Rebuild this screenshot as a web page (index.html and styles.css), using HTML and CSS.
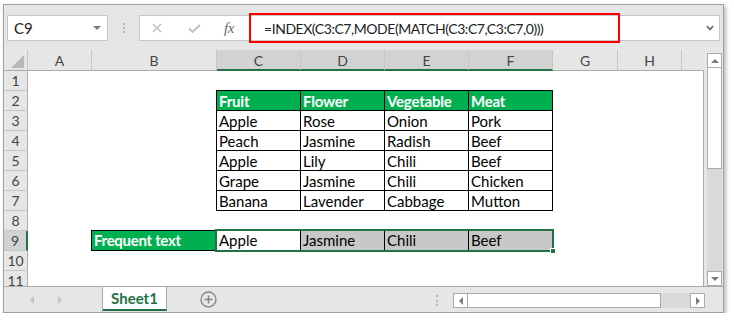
FILE: index.html
```html
<!DOCTYPE html>
<html>
<head>
<meta charset="utf-8">
<title>Excel</title>
<link rel="stylesheet" href="styles.css">
</head>
<body>
<div class="window">
  <div class="toolbar">
    <div class="namebox"><span class="ref">C9</span><span class="dd"></span></div>
    <div class="vdots"><i></i><i></i><i></i></div>
    <div class="fbar">
      <div class="ficons">
        <svg class="ic-x" width="10" height="10" viewBox="0 0 10 10"><path d="M1 1 L9 9 M9 1 L1 9" stroke="#bdbdbd" stroke-width="1.4" fill="none"/></svg>
        <svg class="ic-ok" width="13" height="9" viewBox="0 0 13 9"><path d="M1 4.5 L4.5 8 L12 1" stroke="#bdbdbd" stroke-width="1.8" fill="none"/></svg>
        <span class="fx">fx</span>
      </div>
      <div class="formula">=INDEX(C3:C7,MODE(MATCH(C3:C7,C3:C7,0)))</div>
      <svg class="chev" width="8" height="6" viewBox="0 0 8 6"><path d="M0.8 1 L4 4.4 L7.2 1" stroke="#6b6b6b" stroke-width="1.8" fill="none"/></svg>
    </div>
  </div>

  <div class="sheet">
    <div class="main">
      <div class="colhdrs">
        <div class="corner"><svg width="13" height="13" viewBox="0 0 13 13"><path d="M13 0 L13 13 L0 13 Z" fill="#b9b9b9"/></svg></div>
        <div class="ch w64">A</div>
        <div class="ch w125">B</div>
        <div class="ch w84 sel">C</div>
        <div class="ch w84 sel">D</div>
        <div class="ch w84 sel">E</div>
        <div class="ch w84 sel">F</div>
        <div class="ch w65">G</div>
        <div class="ch w64">H</div>
        <div class="ch rest"></div>
      </div>
      <div class="body">
        <div class="rowhdrs">
          <div class="rh">1</div>
          <div class="rh">2</div>
          <div class="rh">3</div>
          <div class="rh">4</div>
          <div class="rh">5</div>
          <div class="rh">6</div>
          <div class="rh">7</div>
          <div class="rh">8</div>
          <div class="rh sel">9</div>
          <div class="rh">10</div>
          <div class="rh">11</div>
        </div>
        <div class="cells">
          <div class="data">
            <div class="c hd">Fruit</div><div class="c hd">Flower</div><div class="c hd">Vegetable</div><div class="c hd">Meat</div>
            <div class="c">Apple</div><div class="c">Rose</div><div class="c">Onion</div><div class="c">Pork</div>
            <div class="c">Peach</div><div class="c">Jasmine</div><div class="c">Radish</div><div class="c">Beef</div>
            <div class="c">Apple</div><div class="c">Lily</div><div class="c">Chili</div><div class="c">Beef</div>
            <div class="c">Grape</div><div class="c">Jasmine</div><div class="c">Chili</div><div class="c">Chicken</div>
            <div class="c">Banana</div><div class="c">Lavender</div><div class="c">Cabbage</div><div class="c">Mutton</div>
          </div>
          <div class="label">Frequent text</div>
          <div class="selection">
            <div class="s active">Apple</div>
            <div class="s">Jasmine</div>
            <div class="s">Chili</div>
            <div class="s">Beef</div>
            <span class="handle"></span>
          </div>
        </div>
      </div>
    </div>
    <div class="vscroll">
      <div class="sbtn"><span class="tri-up"></span></div>
      <div class="vthumb"></div>
      <div class="vtrack"></div>
      <div class="sbtn"><span class="tri-down"></span></div>
    </div>
  </div>

  <div class="tabbar">
    <div class="nav"><span class="nl"></span><span class="nr"></span></div>
    <div class="tab">Sheet1</div>
    <svg class="plus" width="17" height="17" viewBox="0 0 17 17"><circle cx="8.5" cy="8.5" r="7.5" stroke="#858585" stroke-width="1.3" fill="none"/><path d="M8.5 4.5 V12.5 M4.5 8.5 H12.5" stroke="#858585" stroke-width="1.5"/></svg>
    <div class="hdots"><i></i><i></i><i></i></div>
    <div class="hscroll">
      <div class="sbtn"><span class="tri-left"></span></div>
      <div class="hthumb"></div>
      <div class="htrack"></div>
      <div class="sbtn"><span class="tri-right"></span></div>
    </div>
  </div>
</div>
</body>
</html>
```

FILE: styles.css
```css
* { box-sizing: border-box; }
html, body { margin: 0; padding: 0; background: #fff; }
body { font-family: Lato, "Liberation Sans", sans-serif; color: #000; }

.window {
  margin: 4px 0 0 3px;
  width: 721px;
  height: 309px;
  border: 1px solid #a0a0a0;
  background: #e6e6e6;
  box-shadow: 2px 2px 4px rgba(0,0,0,0.28);
  display: flex;
  flex-direction: column;
}

/* toolbar */
.toolbar { height: 45px; flex: none; display: flex; align-items: flex-start; padding: 10px 0 0 3px; }
.namebox {
  width: 101px; height: 26px; background: #fff; border: 1px solid #c6c6c6;
  display: flex; align-items: center; padding-left: 6px; font-size: 15px; color: #222;
}
.namebox .dd { margin-left: auto; margin-right: 6px; border-left: 4px solid transparent; border-right: 4px solid transparent; border-top: 4px solid #7a7a7a; }
.vdots { margin: 8px 0 0 15px; width: 2px; display: flex; flex-direction: column; gap: 2px; }
.vdots i, .hdots i { display: block; width: 2px; height: 2px; background: #b5b5b5; }
.fbar {
  margin-left: 14px; width: 581px; height: 26px; background: #fff; border: 1px solid #c6c6c6;
  display: flex; align-items: center;
}
.ficons { width: 109px; flex: none; display: flex; align-items: center; }
.ic-x { margin-left: 12px; }
.ic-ok { margin-left: 26px; }
.fx { margin-left: 23px; font-family: "Liberation Serif", serif; font-style: italic; font-size: 15px; color: #6a6a6a; letter-spacing: -0.5px; }
.formula {
  width: 371px; height: 30px; flex: none; border: 2px solid #f00; display: flex; align-items: center;
  padding-left: 13px; font-size: 14px; letter-spacing: -0.45px; color: #222; white-space: nowrap;
}
.chev { margin-left: auto; margin-right: 5px; }

/* sheet */
.sheet { height: 236px; flex: none; display: flex; }
.main { width: 700px; display: flex; flex-direction: column; }
.colhdrs { height: 21px; flex: none; display: flex; }
.corner { width: 24px; flex: none; border-right: 1px solid #c6c6c6; border-bottom: 1px solid #ababab; display: flex; align-items: flex-end; justify-content: flex-end; padding: 0 3px 2px 0; }
.ch {
  flex: none; border-right: 1px solid #c6c6c6; border-bottom: 1px solid #ababab;
  display: flex; align-items: center; justify-content: center; font-size: 14px; color: #444; padding-top: 1px;
}
.ch.sel { background: #d2d2d2; border-bottom: 2px solid #217346; padding-top: 2px; }
.w64 { width: 64px; } .w125 { width: 125px; } .w84 { width: 84px; } .w65 { width: 65px; }
.ch.rest { flex: 1; border-right: none; }

.body { flex: 1; display: flex; overflow: hidden; }
.rowhdrs { width: 24px; flex: none; display: flex; flex-direction: column; }
.rh {
  height: 20px; flex: none; border-right: 1px solid #ababab; border-bottom: 1px solid #c6c6c6;
  display: flex; align-items: center; justify-content: center; font-size: 14px; color: #444;
}
.rh.sel { background: #d2d2d2; border-right: 2px solid #217346; }

.cells {
  flex: 1; background: #fff; border-right: 1px solid #ababab;
  display: grid; grid-template-columns: 64px 125px 84px 84px 84px 84px 65px 64px 1fr;
  grid-template-rows: repeat(11, 20px); align-content: start;
}
.data {
  grid-column: 3 / span 4; grid-row: 2 / span 6; margin: -1px 0 0 -1px;
  width: 337px; height: 121px; background: #000; padding: 1px;
  display: grid; grid-template-columns: repeat(4, 83px); grid-template-rows: repeat(6, 19px); gap: 1px;
}
.c { background: #fff; font-size: 15px; line-height: 19px; padding: 1px 0 0 2px; white-space: nowrap; }
.c.hd { background: #00b050; color: #fff; font-weight: bold; letter-spacing: -0.2px; }
.label {
  grid-column: 2; grid-row: 9; margin: -1px 0 0 -1px; height: 21px;
  background: #00b050; border: 1px solid #000; color: #fff; font-weight: bold; letter-spacing: -0.3px;
  font-size: 15px; line-height: 19px; padding: 0 0 0 2px; white-space: nowrap;
}
.selection {
  grid-column: 3 / span 4; grid-row: 9; margin: -2px -1px -1px -2px; position: relative;
  border: 2px solid #217346; background: #fff;
  display: grid; grid-template-columns: 83px 84px 84px 84px;
}
.s { background: #c8c8c8; border-left: 1px solid #000; font-size: 15px; line-height: 19px; padding: 0 0 0 2px; white-space: nowrap; }
.s.active { background: #fff; border-left: none; padding-left: 2px; }
.handle { position: absolute; right: -4px; bottom: -4px; width: 6px; height: 6px; background: #217346; border: 1px solid #fff; }

/* vertical scrollbar */
.vscroll { width: 19px; flex: none; display: flex; flex-direction: column; padding: 3px 0 0 3px; }
.sbtn { width: 15px; height: 15px; flex: none; background: #fff; border: 1px solid #ababab; display: flex; align-items: center; justify-content: center; }
.vthumb { width: 15px; height: 101px; flex: none; background: #fff; border: 1px solid #ababab; border-top: none; }
.vtrack { flex: 1; width: 15px; background: #dadada; }
.tri-up { border-left: 4px solid transparent; border-right: 4px solid transparent; border-bottom: 4px solid #7a7a7a; }
.tri-down { border-left: 4px solid transparent; border-right: 4px solid transparent; border-top: 4px solid #7a7a7a; }
.tri-left { border-top: 4px solid transparent; border-bottom: 4px solid transparent; border-right: 4px solid #7a7a7a; }
.tri-right { border-top: 4px solid transparent; border-bottom: 4px solid transparent; border-left: 4px solid #7a7a7a; }

/* tab bar */
.tabbar { height: 26px; flex: none; border-top: 1px solid #ababab; display: flex; align-items: flex-start; }
.nav { width: 99px; height: 25px; flex: none; border-right: 1px solid #ababab; display: flex; align-items: center; padding-left: 26px; }
.nl { border-top: 4px solid transparent; border-bottom: 4px solid transparent; border-right: 4px solid #c4c4c4; }
.nr { margin-left: 24px; border-top: 4px solid transparent; border-bottom: 4px solid transparent; border-left: 4px solid #c4c4c4; }
.tab {
  width: 64px; height: 24px; flex: none; background: #fff; border-right: 1px solid #ababab; border-bottom: 2px solid #217346;
  display: flex; align-items: center; justify-content: center; color: #217346; font-weight: bold; font-size: 15px;
}
.plus { margin: 4px 0 0 33px; flex: none; }
.hdots { margin: 8px 0 0 auto; display: flex; flex-direction: column; gap: 2.5px; }
.hscroll { margin: 6px 18px 0 15px; width: 252px; height: 15px; display: flex; }
.hthumb { width: 193px; height: 15px; background: #fff; border: 1px solid #ababab; border-left: none; }
.htrack { flex: 1; background: #dadada; }
```
